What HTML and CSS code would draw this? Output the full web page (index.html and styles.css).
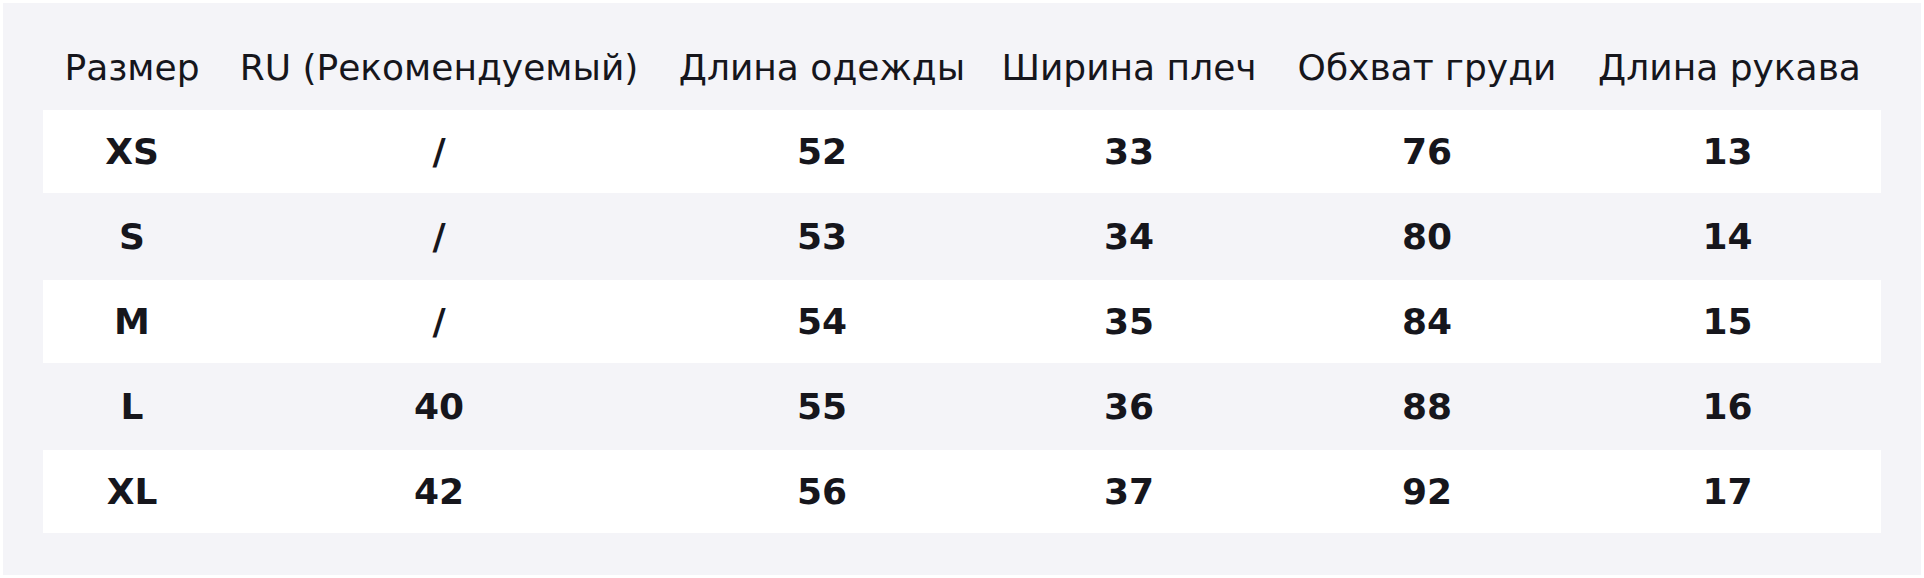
FILE: index.html
```html
<!DOCTYPE html>
<html lang="ru">
<head>
<meta charset="utf-8">
<title>Таблица размеров</title>
<link rel="stylesheet" href="styles.css">
</head>
<body>
<div class="panel">
  <table class="sizes">
    <colgroup>
      <col class="c1"><col class="c2"><col class="c3"><col class="c4"><col class="c5"><col class="c6">
    </colgroup>
    <thead>
      <tr>
        <th>Размер</th>
        <th>RU (Рекомендуемый)</th>
        <th>Длина одежды</th>
        <th>Ширина плеч</th>
        <th>Обхват груди</th>
        <th>Длина рукава</th>
      </tr>
    </thead>
    <tbody>
      <tr class="light"><td>XS</td><td>/</td><td>52</td><td>33</td><td>76</td><td>13</td></tr>
      <tr><td>S</td><td>/</td><td>53</td><td>34</td><td>80</td><td>14</td></tr>
      <tr class="light"><td>M</td><td>/</td><td>54</td><td>35</td><td>84</td><td>15</td></tr>
      <tr><td>L</td><td>40</td><td>55</td><td>36</td><td>88</td><td>16</td></tr>
      <tr class="light"><td>XL</td><td>42</td><td>56</td><td>37</td><td>92</td><td>17</td></tr>
    </tbody>
  </table>
</div>
</body>
</html>
```

FILE: styles.css
```css
html, body {
  margin: 0;
  padding: 0;
  background: #ffffff;
}

body {
  font-family: "DejaVu Sans", "Noto Sans", sans-serif;
  color: #16161c;
}

.panel {
  margin: 3px;
  height: 572px;
  box-sizing: border-box;
  padding: 40px;
  background: #f4f4f8;
}

.sizes {
  width: 100%;
  border-collapse: separate;
  border-spacing: 0 2px;
  table-layout: fixed;
}

.c1 { width: 178px; }
.c2 { width: 436px; }
.c3 { width: 330px; }
.c4 { width: 284px; }
.c5 { width: 312px; }
.c6 { width: 298px; }

.sizes th {
  font-size: 36px;
  font-weight: normal;
  line-height: 42px;
  height: 42px;
  padding: 2px 0 19px;
  text-align: center;
  vertical-align: top;
  white-space: nowrap;
}

.sizes td {
  font-size: 36px;
  font-weight: bold;
  line-height: 42px;
  height: 83px;
  padding: 0;
  box-sizing: border-box;
  text-align: center;
  vertical-align: middle;
}

.sizes th:last-child {
  padding-right: 5px;
}

.sizes td:last-child {
  padding-right: 9px;
}

.sizes tr.light td {
  background: #ffffff;
}
```
